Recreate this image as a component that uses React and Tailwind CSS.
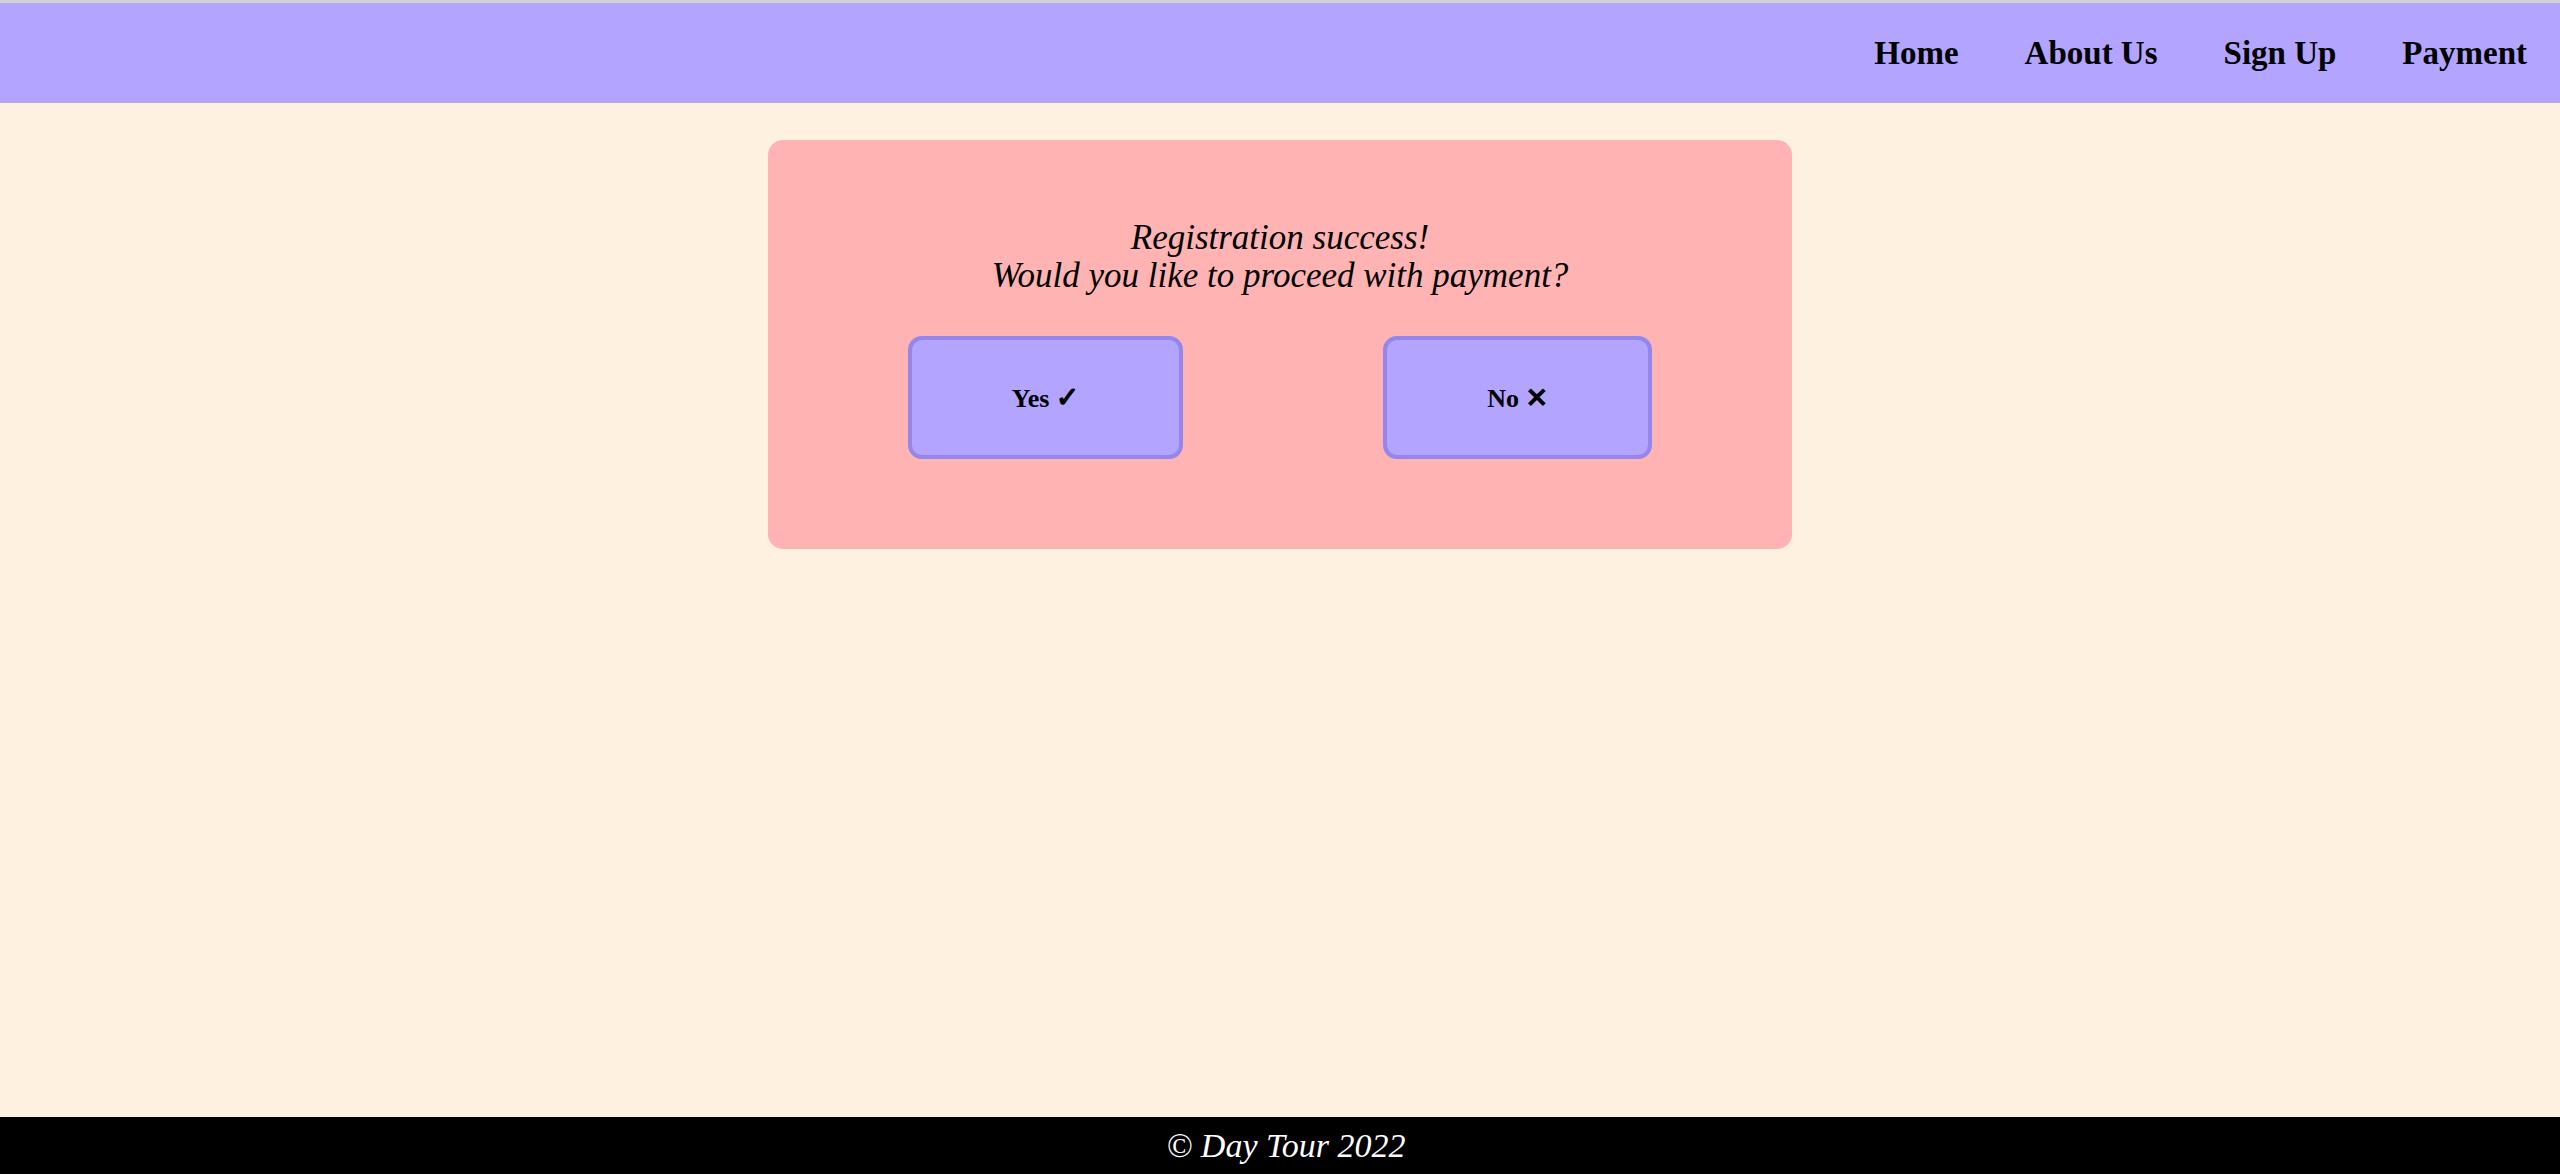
import React from "react";

export default function App() {
  return (
    <div className="min-h-screen flex flex-col bg-[#FFF1E0]">
      <header className="h-[103px] border-t-[3px] border-[#cfcfcf] bg-[#B3A4FF] flex items-center justify-end">
        <nav className="flex font-['Liberation_Serif',serif] font-bold text-[33px] text-black">
          <a className="px-[33px] leading-none">Home</a>
          <a className="px-[33px] leading-none">About Us</a>
          <a className="px-[33px] leading-none">Sign Up</a>
          <a className="px-[33px] leading-none">Payment</a>
        </nav>
      </header>
      <main className="flex-1">
        <div className="mt-[37px] mx-auto w-[1024px] h-[409px] rounded-[15px] bg-[#FFB3B3] pt-[79px] flex flex-col items-center">
          <p className="font-['Liberation_Serif',serif] italic text-[35px] leading-[38px] text-black text-center">
            Registration success!
            <br />
            Would you like to proceed with payment?
          </p>
          <div className="mt-[41px] flex justify-center gap-[200px]">
            <button className="h-[123px] px-[100px] rounded-[14px] border-[4px] border-[#9486EB] bg-[#B3A4FF] font-['Liberation_Serif',serif] font-bold text-[26px] leading-[29px] text-black">
              Yes <span className="font-['DejaVu_Sans',sans-serif] text-[28px] [-webkit-text-stroke:1.2px_black]">✓</span>
            </button>
            <button className="h-[123px] px-[100px] rounded-[14px] border-[4px] border-[#9486EB] bg-[#B3A4FF] font-['Liberation_Serif',serif] font-bold text-[26px] leading-[29px] text-black">
              No <span className="font-['DejaVu_Sans',sans-serif] text-[27px] [-webkit-text-stroke:1.2px_black]">✕</span>
            </button>
          </div>
        </div>
      </main>
      <footer className="h-[57px] bg-black flex items-center justify-center pl-[12px]">
        <span className="font-['Liberation_Serif',serif] italic text-[34px] leading-none text-white">© Day Tour 2022</span>
      </footer>
    </div>
  );
}
